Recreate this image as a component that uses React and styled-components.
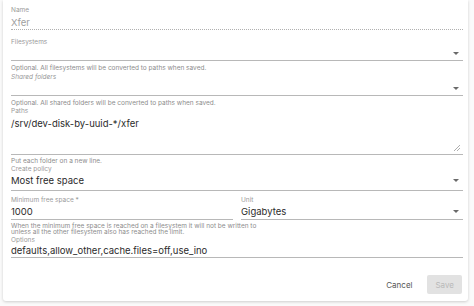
import React from 'react';
import styled, { createGlobalStyle } from 'styled-components';

const GlobalStyle = createGlobalStyle`
  html, body {
    margin: 0;
    padding: 0;
    background: #fafafa;
  }
  body {
    font-family: Inter, 'Noto Sans', 'Liberation Sans', sans-serif;
    width: 474px;
    height: 306px;
    overflow: hidden;
  }
`;

const Card = styled.div`
  margin: 0 0 0 3px;
  width: 465px;
  height: 301px;
  box-sizing: border-box;
  background: #fff;
  border-radius: 0 0 3px 3px;
  box-shadow: 0 1px 3px rgba(0, 0, 0, 0.18);
  padding: 6px 5px 0 8px;
  display: flex;
  flex-direction: column;
`;

const Field = styled.div`
  display: flex;
  flex-direction: column;
  margin-bottom: ${(p) => p.$gap || 0}px;
`;

const Row = styled.div`
  display: flex;
  gap: 8px;
`;

const Label = styled.div`
  font-size: 6.5px;
  line-height: 9px;
  height: 9px;
  color: #9a9a9a;
  font-style: ${(p) => (p.$italic ? 'italic' : 'normal')};
`;

const Control = styled.div`
  position: relative;
  display: flex;
  align-items: ${(p) => (p.$top ? 'flex-start' : 'center')};
  height: ${(p) => p.$h}px;
  border-bottom: 1px ${(p) => (p.$disabled ? 'dotted #b0b0b0' : 'solid #b8b8b8')};
  font-size: 9.5px;
  color: ${(p) => (p.$disabled ? '#a0a0a0' : '#2b2b2b')};
  padding-top: ${(p) => (p.$top ? 2 : 0)}px;
  padding-bottom: ${(p) => p.$lift || 0}px;
  box-sizing: border-box;
`;

const Value = styled.span`
  flex: 1;
  white-space: nowrap;
`;

const Arrow = styled.span`
  width: 0;
  height: 0;
  margin-right: 4px;
  border-left: 3px solid transparent;
  border-right: 3px solid transparent;
  border-top: 3px solid #6a6a6a;
`;

const Resize = styled.svg`
  position: absolute;
  right: 3px;
  bottom: 3px;
`;

const Hint = styled.div`
  font-size: 6.5px;
  line-height: 6.5px;
  color: #8c8c8c;
  padding: ${(p) => p.$pad || '4px 0 1px'};
`;

const Half = styled.div`
  flex: 1;
`;

const Actions = styled.div`
  margin-top: auto;
  margin-bottom: 7px;
  display: flex;
  justify-content: flex-end;
  align-items: center;
  gap: 13px;
  padding-right: 1px;
`;

const Button = styled.button`
  font-family: inherit;
  font-size: 8px;
  border: none;
  border-radius: 2px;
  height: 19px;
  padding: 0 ${(p) => (p.$filled ? 8 : 2)}px;
  background: ${(p) => (p.$filled ? '#e2e2e2' : 'transparent')};
  color: ${(p) => (p.$filled ? '#b9b9b9' : '#555')};
`;

const Select = ({ h, value, lift }) => (
  <Control $h={h} $lift={lift}>
    <Value>{value}</Value>
    <Arrow />
  </Control>
);

const App = () => (
  <>
    <GlobalStyle />
    <Card>
      <Field $gap={8}>
        <Label>Name</Label>
        <Control $h={15} $disabled>
          <Value>Xfer</Value>
        </Control>
      </Field>
      <Field>
        <Label>Filesystems</Label>
        <Select h={14} />
        <Hint>Optional. All filesystems will be converted to paths when saved.</Hint>
      </Field>
      <Field>
        <Label $italic>Shared folders</Label>
        <Select h={14} />
        <Hint>Optional. All shared folders will be converted to paths when saved.</Hint>
      </Field>
      <Field>
        <Label>Paths</Label>
        <Control $h={39} $top>
          <Value>/srv/dev-disk-by-uuid-*/xfer</Value>
          <Resize width="6" height="6" viewBox="0 0 6 6">
            <path d="M6 0 L0 6 M6 3 L3 6" stroke="#999" strokeWidth="0.8" />
          </Resize>
        </Control>
        <Hint $pad="3px 0 0">Put each folder on a new line.</Hint>
      </Field>
      <Field $gap={5}>
        <Label>Create policy</Label>
        <Select h={17} lift={3} value="Most free space" />
      </Field>
      <Row>
        <Half>
          <Field>
            <Label>Minimum free space *</Label>
            <Control $h={15}>
              <Value>1000</Value>
            </Control>
          </Field>
        </Half>
        <Half>
          <Field>
            <Label>Unit</Label>
            <Select h={15} value="Gigabytes" />
          </Field>
        </Half>
      </Row>
      <Hint $pad="3px 0 0">
        When the minimum free space is reached on a filesystem it will not be written to
        <br />
        unless all the other filesystem also has reached the limit.
      </Hint>
      <Field>
        <Label>Options</Label>
        <Control $h={13}>
          <Value>defaults,allow_other,cache.files=off,use_ino</Value>
        </Control>
      </Field>
      <Actions>
        <Button>Cancel</Button>
        <Button $filled>Save</Button>
      </Actions>
    </Card>
  </>
);

export default App;
